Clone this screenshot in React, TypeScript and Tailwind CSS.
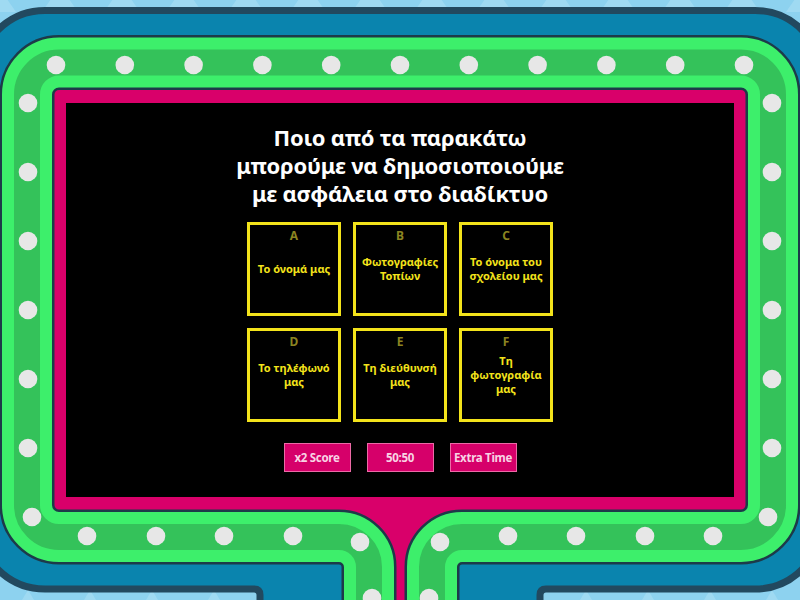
import React from "react";

const topDots = Array.from({ length: 11 }, (_, k) => [56 + 68.8 * k, 65]);
const sideY = [103, 172, 241, 310, 379, 448];
const dots: number[][] = [
  ...topDots,
  ...sideY.map((y) => [28, y]),
  ...sideY.map((y) => [772, y]),
  [32, 517],
  [768, 517],
  [87, 536],
  [156, 536],
  [224, 536],
  [293, 536],
  [360, 542],
  [440, 542],
  [508, 536],
  [576, 536],
  [645, 536],
  [713, 536],
  [372, 598],
  [429, 598],
];

const band =
  "M 369 620 L 369 567 A 30 30 0 0 0 339 537 L 59 537 A 32 32 0 0 1 27 505 L 27 94.5 A 32 32 0 0 1 59 62.5 L 741 62.5 A 32 32 0 0 1 773 94.5 L 773 505 A 32 32 0 0 1 741 537 L 462 537 A 30 30 0 0 0 432 567 L 432 620";

const silhouette =
  "M -21.5 77 A 66.5 66.5 0 0 1 45 10.5 L 755 10.5 A 66.5 66.5 0 0 1 821.5 77 L 821.5 522.5 A 66.5 66.5 0 0 1 755 589 L 546 589 Q 540 589 540 595 L 540 640 L 260 640 L 260 595 Q 260 589 254 589 L 45 589 A 66.5 66.5 0 0 1 -21.5 522.5 Z";

const tris = Array.from({ length: 14 }, (_, i) => i * 62 - 20);

function Frame() {
  return (
    <svg
      className="absolute inset-0"
      width={800}
      height={600}
      viewBox="0 0 800 600"
    >
      <rect x={0} y={0} width={800} height={600} fill="#8dd2ef" />
      {tris.map((x, i) => (
        <g key={i} fill="#a6ddf3" opacity={0.7}>
          <polygon points={`${x},12 ${x + 18},-14 ${x + 36},12`} />
          <polygon points={`${x + 30},620 ${x + 48},590 ${x + 66},620`} />
        </g>
      ))}
      <path d={silhouette} fill="#0a84ae" stroke="#22495f" strokeWidth={7} />
      <path d={band + " Z"} fill="#d9006a" />
      <path d={band} fill="none" stroke="#1d3a49" strokeWidth={55} />
      <path d={band} fill="none" stroke="#3def6b" strokeWidth={50} />
      <path d={band} fill="none" stroke="#34c25a" strokeWidth={26} />
      {dots.map(([x, y], i) => (
        <circle key={i} cx={x} cy={y} r={9.3} fill="#e7e7e7" />
      ))}
    </svg>
  );
}

const answers = [
  { l: "A", t: ["Το όνομά μας"] },
  { l: "B", t: ["Φωτογραφίες", "Τοπίων"] },
  { l: "C", t: ["Το όνομα του", "σχολείου μας"] },
  { l: "D", t: ["Το τηλέφωνό", "μας"] },
  { l: "E", t: ["Τη διεύθυνσή", "μας"] },
  { l: "F", t: ["Τη", "φωτογραφία", "μας"] },
];

export default function App() {
  return (
    <div
      className="relative w-[800px] h-[600px] overflow-hidden"
      style={{ fontFamily: '"Noto Sans", "Open Sans", sans-serif' }}
    >
      <Frame />
      <div className="relative ml-[66px] mt-[103px] w-[668px] h-[394px] bg-black flex flex-col items-center pt-[20px]">
        <div className="text-white font-bold text-[22px] leading-[28px] text-center tracking-[-0.2px]">
          <div>Ποιο από τα παρακάτω</div>
          <div>μπορούμε να δημοσιοποιούμε</div>
          <div>με ασφάλεια στο διαδίκτυο</div>
        </div>
        <div className="mt-[15px] grid grid-cols-3 gap-[12px]">
          {answers.map((a) => (
            <div
              key={a.l}
              className="w-[94px] h-[94px] border-[3px] border-[#f3e31b] flex flex-col items-center"
            >
              <div className="h-[20px] pt-[4px] text-[12px] leading-[14px] font-bold text-[#8b8420]">
                {a.l}
              </div>
              <div className="flex-1 flex flex-col items-center justify-center text-center text-[11px] leading-[14px] font-bold text-[#f3e31b]">
                {a.t.map((s, i) => (
                  <div key={i}>{s}</div>
                ))}
              </div>
              <div className="h-[20px]" />
            </div>
          ))}
        </div>
        <div className="mt-[21px] flex gap-[16px]">
          {["x2 Score", "50:50", "Extra Time"].map((b) => (
            <div
              key={b}
              className="w-[67px] h-[29px] bg-[#d6006a] border border-[#ec6aa6] flex items-center justify-center text-[11.5px] font-bold text-[#f8d3e4] tracking-[-0.3px]"
            >
              {b}
            </div>
          ))}
        </div>
      </div>
    </div>
  );
}
